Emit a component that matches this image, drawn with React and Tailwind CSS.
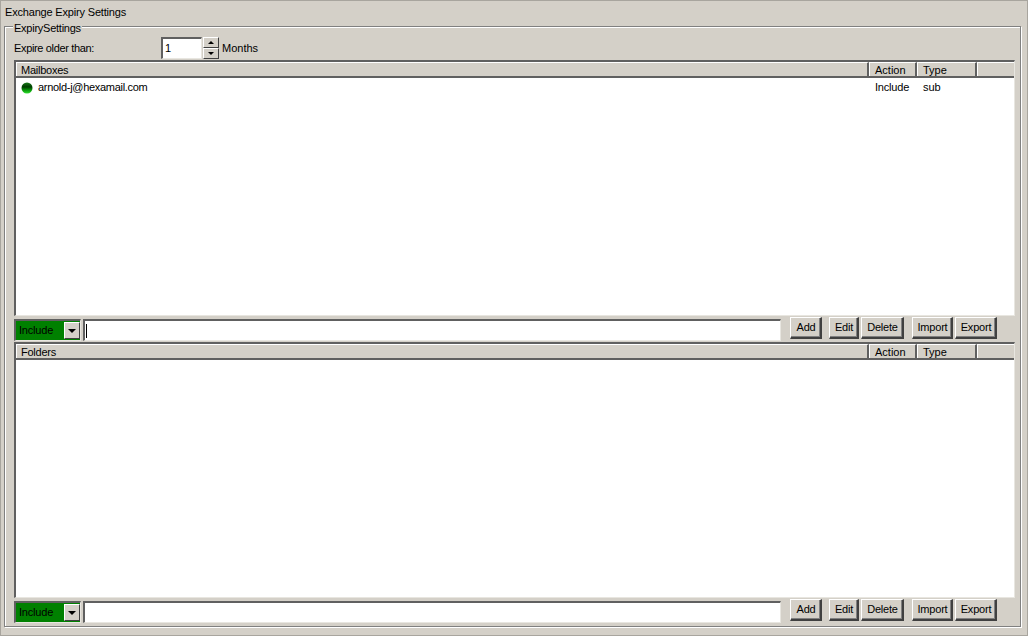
import React from 'react';

const font = { fontFamily: '"Liberation Sans", Arial, sans-serif' };

const sunken = 'border-t-2 border-l-2 border-t-[#606060] border-l-[#606060] border-r border-b border-r-[#e8e6e0] border-b-[#e8e6e0]';
const raised = 'bg-[#d4d0c8] border-t border-l border-t-white border-l-white border-r border-b border-r-[#404040] border-b-[#404040]';

function Btn({ children, className = '' }) {
  return (
    <button
      className={`h-[22px] pl-px flex items-center justify-center bg-[#d4d0c8] text-[11px] tracking-[-0.2px] text-black border-t border-l border-t-white border-l-white border-r-2 border-b-2 border-r-[#404040] border-b-[#404040] shadow-[inset_-1px_-1px_0_#808080] ${className}`}
    >
      {children}
    </button>
  );
}

function HeaderCell({ children, className = '' }) {
  return (
    <div
      className={`h-full pt-px flex items-center text-[11px] border-t border-l border-t-white border-l-white border-r-2 border-r-[#606060] ${className}`}
    >
      {children}
    </div>
  );
}

function ListPanel({ title, rows = [] }) {
  return (
    <div className={`w-[1001px] h-[256px] flex flex-col ${sunken} bg-white`}>
      <div className="h-[14px] flex shrink-0 bg-[#d4d0c8] border-b-2 border-b-[#606060] box-content">
        <HeaderCell className="w-[853px] pl-[4px] tracking-[-0.25px]">{title}</HeaderCell>
        <HeaderCell className="w-[48px] pl-[5px]">Action</HeaderCell>
        <HeaderCell className="w-[60px] pl-[5px]">Type</HeaderCell>
        <div className="flex-1 border-t border-l border-t-white border-l-white" />
      </div>
      {rows.map((row) => (
        <div key={row.name} className="flex h-[17px] mt-px items-center text-[11px]">
          <div className="w-[853px] flex items-center pl-[5px] gap-[5px]">
            <svg width="12" height="12" viewBox="0 0 12 12">
              <defs>
                <linearGradient id="dot" x1="0" y1="0" x2="0" y2="1">
                  <stop offset="0" stopColor="#1a7a1a" />
                  <stop offset="0.4" stopColor="#003c00" />
                  <stop offset="0.7" stopColor="#0a9a0a" />
                  <stop offset="1" stopColor="#30e030" />
                </linearGradient>
              </defs>
              <circle cx="6" cy="6" r="5.5" fill="url(#dot)" />
            </svg>
            <span className="tracking-[-0.3px]">{row.name}</span>
          </div>
          <div className="w-[48px] pl-[6px] tracking-[-0.2px]">{row.action}</div>
          <div className="pl-[6px]">{row.type}</div>
        </div>
      ))}
    </div>
  );
}

function Toolbar({ caret = false }) {
  return (
    <div className="h-[26px] w-[1001px] flex items-start">
      <div className={`w-[67px] h-[22px] mt-[3px] flex items-center bg-[#008000] ${sunken}`}>
        <span className="flex-1 pl-[3px] text-[11px] tracking-[-0.2px] text-black">Include</span>
        <div className={`w-[16px] h-[17px] flex items-center justify-center ${raised}`}>
          <div className="w-0 h-0 border-l-[4px] border-r-[4px] border-t-[4px] border-l-transparent border-r-transparent border-t-black" />
        </div>
      </div>
      <div className={`ml-[2px] w-[698px] h-[22px] mt-[3px] flex items-center pl-[1px] bg-white ${sunken}`}>
        {caret && <div className="w-px h-[14px] bg-black" />}
      </div>
      <div className="flex items-center mt-[1px]">
        <Btn className="ml-[9px] w-[32px]">Add</Btn>
        <Btn className="ml-[7px] w-[30px]">Edit</Btn>
        <Btn className="ml-[2px] w-[43px]">Delete</Btn>
        <Btn className="ml-[8px] w-[41px]">Import</Btn>
        <Btn className="ml-[2px] w-[42px]">Export</Btn>
      </div>
    </div>
  );
}

export default function App() {
  return (
    <div style={font} className="w-[1028px] h-[636px] flex flex-col bg-[#d4d0c8] text-black overflow-hidden border border-[#a8a59e] pl-[3px] pr-[6px] pb-[8px]">
      <div className="h-[25px] pl-[1px] pt-[3px] text-[11px] tracking-[-0.18px] leading-[17px]">Exchange Expiry Settings</div>
      <div className="relative flex-1 flex flex-col pl-[9px] pt-[10px] border border-[#808080] shadow-[inset_1px_1px_0_#fff,1px_1px_0_#fff]">
        <span className="absolute left-[8px] -top-[6px] px-[1px] bg-[#d4d0c8] text-[11px] tracking-[-0.25px] leading-[14px]">ExpirySettings</span>
        <div className="h-[23px] pb-px flex items-center text-[11px]">
          <span className="w-[147px] tracking-[-0.35px]">Expire older than:</span>
          <div className={`w-[41px] h-[22px] flex items-center pl-[2px] bg-white ${sunken}`}>1</div>
          <div className="ml-px w-[16px] h-[22px] flex flex-col">
            <div className={`h-[11px] flex items-center justify-center ${raised}`}>
              <div className="w-0 h-0 border-l-[3px] border-r-[3px] border-b-[3px] border-l-transparent border-r-transparent border-b-black" />
            </div>
            <div className={`h-[11px] flex items-center justify-center ${raised}`}>
              <div className="w-0 h-0 border-l-[3px] border-r-[3px] border-t-[3px] border-l-transparent border-r-transparent border-t-black" />
            </div>
          </div>
          <span className="ml-[3px]">Months</span>
        </div>
        <ListPanel
          title="Mailboxes"
          rows={[{ name: 'arnold-j@hexamail.com', action: 'Include', type: 'sub' }]}
        />
        <Toolbar caret />
        <ListPanel title="Folders" />
        <Toolbar />
      </div>
    </div>
  );
}
